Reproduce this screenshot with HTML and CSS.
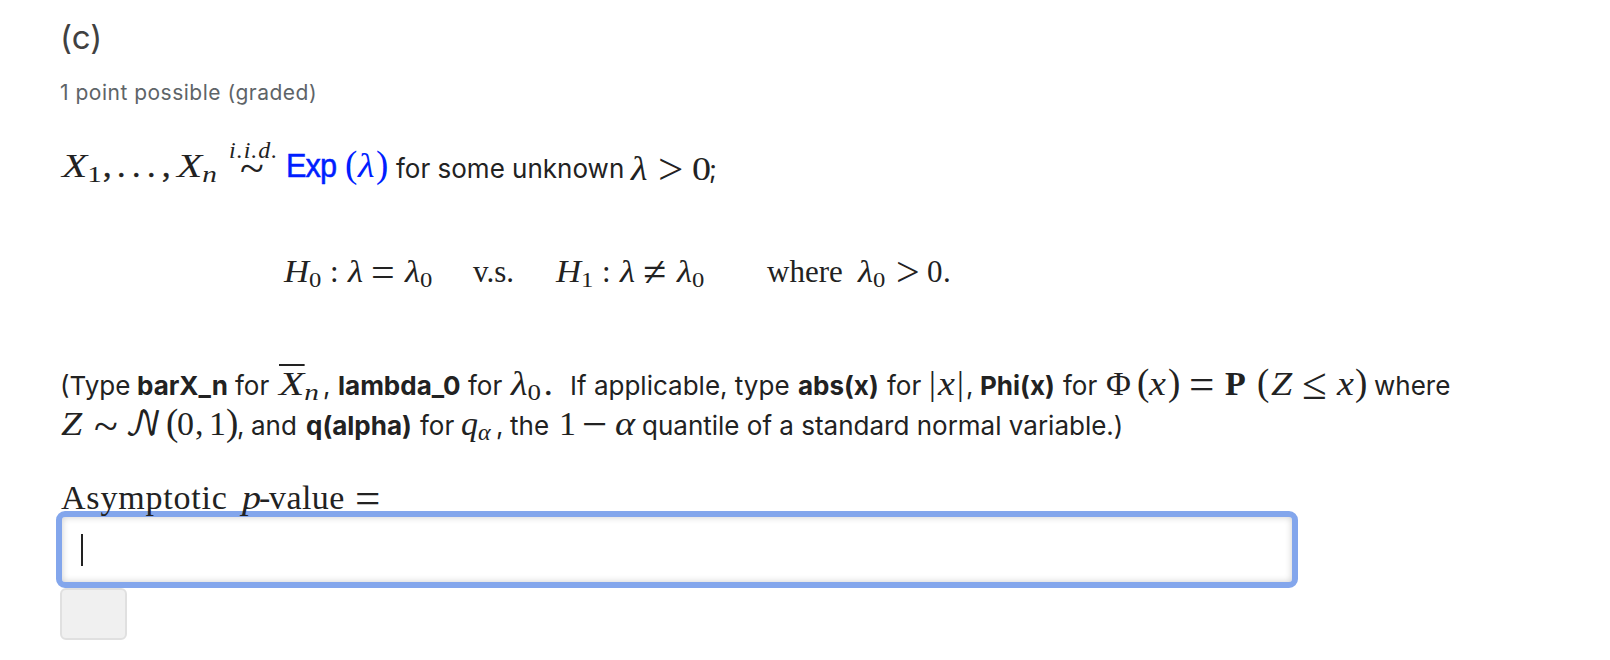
FILE: index.html
```html
<!DOCTYPE html>
<html lang="en">
<head>
    <meta charset="UTF-8">
    <meta name="viewport" content="width=device-width, initial-scale=1.0">
    <title>(c)</title>
    <link rel="stylesheet" href="styles.css">
</head>
<body>
    <h3>(c)</h3>
    <div class="progress">1 point possible (graded)</div>

    <div class="line sample">
        <i class="wide">X<sub class="up">1</sub></i>
        <span class="m dots">,</span>
        <span class="m dots">...</span>
        <span class="m dots">,</span>
        <i class="wide">X<sub>n</sub></i>
        <span class="over"><span class="m tilde">~</span><i class="top">i.i.d.</i></span>
        <span class="exp">Exp</span>
        <span class="m paren blue">(</span>
        <i class="blue">λ</i>
        <span class="m paren blue">)</span>
        <span class="text">for some unknown</span>
        <i class="low">λ</i>
        <span class="m rel low">&gt;</span>
        <span class="m low">0</span>
        <span class="text">;</span>
    </div>

    <div class="line hypotheses">
        <i>H<sub class="up">0</sub></i>
        <span class="m">:</span>
        <i>λ</i>
        <span class="m rel">=</span>
        <i>λ<sub class="up">0</sub></i>
        <span class="m">v.s.</span>
        <i>H<sub class="up">1</sub></i>
        <span class="m">:</span>
        <i>λ</i>
        <span class="m rel">≠</span>
        <i>λ<sub class="up">0</sub></i>
        <span class="m where">where</span>
        <i>λ<sub class="up">0</sub></i>
        <span class="m rel">&gt;</span>
        <span class="m">0</span>
        <span class="m">.</span>
    </div>

    <div class="line hint1">
        <span>(Type</span>
        <strong>barX_n</strong>
        <span>for</span>
        <i class="wide"><span class="bar">X</span><sub>n</sub></i>
        <span>,</span>
        <strong>lambda_0</strong>
        <span>for</span>
        <i>λ<sub class="up">0</sub></i>
        <span class="m dots">.</span>
        <span>If applicable, type</span>
        <strong>abs(x)</strong>
        <span>for</span>
        <span class="m">|</span>
        <i>x</i>
        <span class="m">|</span>
        <span>,</span>
        <strong>Phi(x)</strong>
        <span>for</span>
        <span class="m">Φ</span>
        <span class="m paren">(</span>
        <i>x</i>
        <span class="m paren">)</span>
        <span class="m rel">=</span>
        <b class="m">P</b>
        <span class="m paren">(</span>
        <i>Z</i>
        <span class="m rel">≤</span>
        <i>x</i>
        <span class="m paren">)</span>
        <span>where</span>
    </div>
    <div class="line hint2">
        <i>Z</i>
        <span class="m tilde">~</span>
        <span class="script">𝒩</span>
        <span class="m paren">(</span>
        <span class="m">0</span>
        <span class="m">,</span>
        <span class="m">1</span>
        <span class="m paren">)</span>
        <span>,</span>
        <span>and</span>
        <strong>q(alpha)</strong>
        <span>for</span>
        <i class="quantile">q<sub>α</sub></i>
        <span>,</span>
        <span>the</span>
        <span class="m">1</span>
        <span class="m rel">−</span>
        <i>α</i>
        <span>quantile of a standard normal variable.)</span>
    </div>

    <div class="line answer">
        <span class="m asym">Asymptotic</span>
        <i>p</i>
        <span class="m">-</span>
        <span class="m value">value</span>
        <span class="m rel">=</span>
    </div>
    <div class="field"><span class="caret"></span></div>
    <div class="check"></div>
</body>
</html>
```

FILE: styles.css
```css
body {
    margin: 0;
    padding: 15px 0 0 60px;
    height: 660px;
    box-sizing: border-box;
    overflow: hidden;
    background-color: #fff;
    color: #222;
    font-family: Inter, sans-serif;
    font-size: 26px;
}
h3 {
    margin: 0;
    height: 61px;
    line-height: 44px;
    font-size: 33px;
    font-weight: 400;
    color: #414141;
}
.progress {
    height: 69px;
    line-height: 33px;
    font-size: 21px;
    letter-spacing: 0.5px;
    color: #5e6468;
}
.line {
    display: grid;
    align-items: baseline;
    height: 40px;
    line-height: 40px;
    white-space: nowrap;
}
.line i, .m {
    font-family: "Liberation Serif", serif;
    font-size: 34px;
}
.line > i {
    margin-left: 1px;
    transform: scaleX(1.12);
    transform-origin: left;
}
.line > .wide {
    margin-left: 2px;
    transform: scaleX(1.22);
}
.line sub {
    font-size: 24px;
    line-height: 0;
    vertical-align: -5px;
}
.line .up {
    font-style: normal;
}
.line .rel {
    font-size: 45px;
    line-height: 30px;
    margin-left: -1px;
    transform: translateY(4px);
}
.line .tilde {
    display: inline-block;
    font-size: 44px;
    line-height: 30px;
    transform: translateY(6px);
}
.line .paren {
    font-size: 37px;
}

/* column = start of each term to the start of the next */
.sample {
    grid-template-columns: 43px 14px 45px 13px 65px 48px 57px 12px 19px 20px 234px 29px 34px 16px 10px;
    margin-bottom: 67px;
}
.sample .text {
    transform: translateY(1px);
}
.dots {
    letter-spacing: 6.5px;
    -webkit-text-stroke: 0.5px #222;
}
.over {
    position: relative;
}
.line .top {
    position: absolute;
    left: -11px;
    top: -10px;
    line-height: 24px;
    font-size: 24px;
    letter-spacing: 1px;
}
.exp {
    font-family: "Liberation Sans", sans-serif;
    font-size: 33px;
    letter-spacing: -1px;
    margin-left: -2px;
    color: #001eff;
    -webkit-text-stroke: 0.5px #001eff;
    transform: scaleX(0.93);
    transform-origin: left;
}
.blue {
    color: #001eff;
}
.line .low {
    transform: translateY(3px) scaleX(1.12);
}
.line .rel.low {
    transform: translateY(7px);
}

.hypotheses {
    grid-template-columns: 47px 17px 25px 32px 69px 82px 47px 17px 25px 32px 91px 90px 40px 30px 16px 10px;
    margin-left: 223px;
    margin-bottom: 71px;
}
.hypotheses i, .hypotheses .m {
    font-size: 31px;
}
.line.hypotheses .rel {
    font-size: 42px;
}
.line.hypotheses sub {
    font-size: 22px;
}

.hint1 {
    grid-template-columns: 77px 98px 42px 46px 15px 130px 42px 34px 26px 228px 89px 42px 8px 20px 9px 14px 83px 43px 31px 11px 20px 22px 35px 32px 13px 33px 33px 19px 19px 80px;
}
.bar {
    display: inline-block;
    line-height: 36px;
    border-top: 2px solid #222;
}
.hint2 {
    grid-template-columns: 34px 31px 41px 11px 18px 14px 17px 11px 14px 55px 114px 42px 34px 14px 49px 24px 31px 28px 490px;
    margin-bottom: 33px;
}
.line > .quantile {
    margin-left: -1px;
    transform: none;
}
.script {
    font-family: "DejaVu Math TeX Gyre", "DejaVu Serif", serif;
    font-size: 33px;
}
.answer {
    grid-template-columns: 180px 18px 10px 87px 30px;
    height: 35px;
    padding-left: 1px;
}
.answer > * {
    position: relative;
    top: 2px;
}
.asym {
    letter-spacing: 0.8px;
}
.value {
    letter-spacing: 0.4px;
}

.field {
    display: flex;
    align-items: center;
    width: 1230px;
    height: 65px;
    margin-left: -4px;
    border: 6px solid #83a6ec;
    border-radius: 9px;
    box-shadow: inset 0 0 7px rgba(0, 0, 0, 0.2);
}
.caret {
    width: 2px;
    height: 32px;
    margin-left: 19px;
    background-color: #222;
}
.check {
    width: 63px;
    height: 48px;
    border: 2px solid #e0e0e0;
    border-radius: 6px;
    background-color: #f0f0f0;
}
```
